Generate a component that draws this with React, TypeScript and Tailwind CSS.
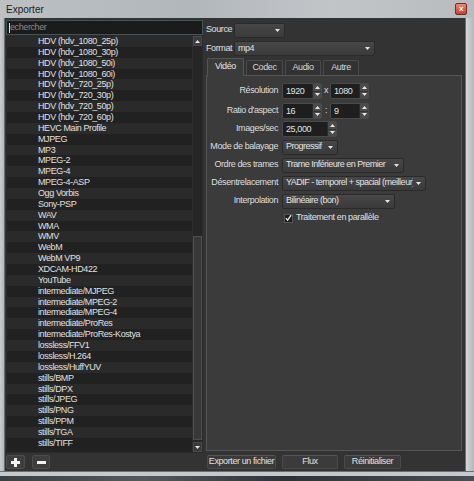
import React from "react";

const presets = [
  "HDV (hdv_1080_25p)",
  "HDV (hdv_1080_30p)",
  "HDV (hdv_1080_50i)",
  "HDV (hdv_1080_60i)",
  "HDV (hdv_720_25p)",
  "HDV (hdv_720_30p)",
  "HDV (hdv_720_50p)",
  "HDV (hdv_720_60p)",
  "HEVC Main Profile",
  "MJPEG",
  "MP3",
  "MPEG-2",
  "MPEG-4",
  "MPEG-4-ASP",
  "Ogg Vorbis",
  "Sony-PSP",
  "WAV",
  "WMA",
  "WMV",
  "WebM",
  "WebM VP9",
  "XDCAM-HD422",
  "YouTube",
  "intermediate/MJPEG",
  "intermediate/MPEG-2",
  "intermediate/MPEG-4",
  "intermediate/ProRes",
  "intermediate/ProRes-Kostya",
  "lossless/FFV1",
  "lossless/H.264",
  "lossless/HuffYUV",
  "stills/BMP",
  "stills/DPX",
  "stills/JPEG",
  "stills/PNG",
  "stills/PPM",
  "stills/TGA",
  "stills/TIFF",
];

function Arrow({ up = false }: { up?: boolean }) {
  return (
    <svg width="5" height="3" viewBox="0 0 5 3" className={up ? "rotate-180" : ""}>
      <path d="M0 0 L5 0 L2.5 3 Z" fill="#e6e6e6" />
    </svg>
  );
}

function Combo({ value, className }: { value: string; className: string }) {
  return (
    <div
      className={
        "flex items-center h-[15px] border border-[#2a2a2a] rounded-[2px] bg-[linear-gradient(to_bottom,#474747,#3a3a3a)] pl-[3px] pr-[4px] gap-[3px] " +
        className
      }
    >
      <span className="flex-1 overflow-hidden whitespace-nowrap text-[#e2e2e2] tracking-[-0.5px]">{value}</span>
      <Arrow />
    </div>
  );
}

function Spin({ value, className }: { value: string; className: string }) {
  return (
    <div className={"flex h-[16px] border border-[#4a4a4a] rounded-[2px] bg-[#1e1e1e] " + className}>
      <span className="flex-1 pl-[3px] leading-[14px] text-[#e2e2e2]">{value}</span>
      <div className="flex flex-col w-[9px] bg-[#4b4b4b] border-l border-[#2a2a2a]">
        <div className="flex-1 flex items-center justify-center border-b border-[#333]">
          <Arrow up />
        </div>
        <div className="flex-1 flex items-center justify-center">
          <Arrow />
        </div>
      </div>
    </div>
  );
}

function Row({ label, children, className = "" }: { label: string; children: React.ReactNode; className?: string }) {
  return (
    <div className={"flex items-center h-[18px] " + className}>
      <span className="w-[71px] text-right whitespace-nowrap text-[#dedede]">{label}</span>
      <div className="flex items-center ml-[4px]">{children}</div>
    </div>
  );
}

function Button({ label, className }: { label: string; className: string }) {
  return (
    <div
      className={
        "h-[14px] flex items-center justify-center border border-[#4a4a4a] border-t-[#555] rounded-[2px] bg-[#3b3b3b] text-[#e0e0e0] whitespace-nowrap " +
        className
      }
    >
      {label}
    </div>
  );
}

export default function App() {
  return (
    <div className="w-[474px] h-[481px] flex flex-col bg-[#c3c6c9] font-['Liberation_Sans',Arial,sans-serif] text-[9px] tracking-[-0.4px] overflow-hidden">
      {/* title bar */}
      <div className="h-[18px] flex items-center bg-[linear-gradient(to_right,#bcc0c3,#b2b7bb_40%,#c2c5c8_70%,#b8bcbf)] pl-[6px] pr-[7px]">
        <span className="flex-1 text-[10px] tracking-normal text-[#1c1c1c]">Exporter</span>
        <div className="w-[12px] h-[12px] rounded-[2px] border border-[#7a2a20] bg-[linear-gradient(to_bottom,#e9897a,#c8402c)] flex items-center justify-center text-white text-[8px] font-bold leading-none">
          x
        </div>
      </div>

      <div className="flex flex-1 min-h-0">
        {/* left frame */}
        <div className="w-[5px] bg-[linear-gradient(to_right,#c9cbcd,#b5b8bb)] border-r border-[#6b6e71]" />

        {/* client */}
        <div className="flex-1 flex bg-[#333333] pl-[1px] pr-[3px] pt-[2px] pb-[1px] gap-[2px]">
          {/* left column */}
          <div className="w-[197px] flex flex-col">
            <div className="h-[15px] flex items-center border border-[#3d5656] bg-[#1b1b1b] pl-[2px]">
              <span className="w-[1px] h-[10px] bg-[#dcdcdc]" />
              <span className="text-[#8a8a8a]">echercher</span>
            </div>
            <div className="h-[418px] flex border border-[#2a2a2a] bg-[#232323]">
              <div className="flex-1 flex flex-col">
                {presets.map((p, i) => (
                  <div
                    key={p}
                    className={
                      "h-[10.86px] pl-[31px] leading-[10.86px] text-[#e0e0e0] whitespace-nowrap " +
                      (i % 2 === 0 ? "bg-[#2a2a2a]" : "bg-[#212121]")
                    }
                  >
                    {p}
                  </div>
                ))}
              </div>
              <div className="w-[10px] flex flex-col bg-[#262626] border-l border-[#2e2e2e]">
                <div className="h-[10px] flex items-center justify-center bg-[#3a3a3a] border border-[#4a4a4a]">
                  <Arrow up />
                </div>
                <div className="flex-1 flex flex-col justify-end pb-[2px]">
                  <div className="h-[204px] bg-[#383838] border border-[#4f4f4f]" />
                </div>
                <div className="h-[10px] flex items-center justify-center bg-[#3a3a3a] border border-[#4a4a4a]">
                  <Arrow />
                </div>
              </div>
            </div>
            <div className="flex gap-[7px] mt-[2px]">
              <div className="w-[19px] h-[14px] flex items-center justify-center bg-[#3e3e3e] border border-[#4c4c4c] rounded-[2px]">
                <svg width="9" height="9" viewBox="0 0 9 9">
                  <path d="M3 0 H6 V3 H9 V6 H6 V9 H3 V6 H0 V3 H3 Z" fill="#f2f2f2" />
                </svg>
              </div>
              <div className="w-[18px] h-[14px] flex items-center justify-center bg-[#3e3e3e] border border-[#4c4c4c] rounded-[2px]">
                <svg width="9" height="3" viewBox="0 0 9 3">
                  <rect width="9" height="3" fill="#f2f2f2" />
                </svg>
              </div>
            </div>
          </div>

          {/* right column */}
          <div className="flex-1 flex flex-col pl-[1px]">
            <div className="flex items-center h-[14px] mt-[3px]">
              <span className="w-[28px] text-[#e0e0e0]">Source</span>
              <Combo value="" className="w-[51px] h-[14px]" />
            </div>
            <div className="flex items-center h-[15px] mt-[4px]">
              <span className="w-[28px] text-[#e0e0e0]">Format</span>
              <Combo value="mp4" className="w-[141px]" />
            </div>

            {/* tabs */}
            <div className="flex items-end h-[18px] mt-[1px] pl-[1px] gap-[2px]">
              <div className="w-[37px] h-[18px] flex items-center justify-center bg-[#3b3b3b] border border-b-0 border-[#555] rounded-t-[2px] text-[#e6e6e6] -mb-[1px] relative z-10 pb-[2px]">
                Vidéo
              </div>
              <div className="w-[37px] h-[15px] flex items-center justify-center bg-[#323232] border border-b-0 border-[#4a4a4a] rounded-t-[2px] text-[#d8d8d8]">
                Codec
              </div>
              <div className="w-[36px] h-[15px] flex items-center justify-center bg-[#323232] border border-b-0 border-[#4a4a4a] rounded-t-[2px] text-[#d8d8d8]">
                Audio
              </div>
              <div className="w-[36px] h-[15px] flex items-center justify-center bg-[#323232] border border-b-0 border-[#4a4a4a] rounded-t-[2px] text-[#d8d8d8]">
                Autre
              </div>
            </div>

            <div className="h-[376px] border border-[#555] bg-[#3b3b3b] flex flex-col pt-[6px]">
              <Row label="Résolution">
                <Spin value="1920" className="w-[40px]" />
                <span className="w-[8px] text-center text-[#dedede]">x</span>
                <Spin value="1080" className="w-[39px]" />
              </Row>
              <Row label="Ratio d'aspect" className="mt-[2px]">
                <Spin value="16" className="w-[40px]" />
                <span className="w-[8px] text-center text-[#dedede]">:</span>
                <Spin value="9" className="w-[39px]" />
              </Row>
              <Row label="Images/sec">
                <Spin value="25,000" className="w-[55px]" />
              </Row>
              <Row label="Mode de balayage">
                <Combo value="Progressif" className="w-[56px]" />
              </Row>
              <Row label="Ordre des trames">
                <Combo value="Trame Inférieure en Premier" className="w-[122px]" />
              </Row>
              <Row label="Désentrelacement">
                <Combo value="YADIF - temporel + spacial (meilleur)" className="w-[144px]" />
              </Row>
              <Row label="Interpolation">
                <Combo value="Bilinéaire (bon)" className="w-[113px]" />
              </Row>
              <div className="flex items-center h-[16px] pl-[77px] gap-[3px]">
                <div className="w-[9px] h-[9px] bg-[#1e1e1e] border border-[#555] flex items-center justify-center">
                  <svg width="8" height="8" viewBox="0 0 8 8">
                    <path d="M1 4.2 L3 6.5 L7 0.8" stroke="#f0f0f0" strokeWidth="1.4" fill="none" />
                  </svg>
                </div>
                <span className="text-[#e0e0e0]">Traitement en parallèle</span>
              </div>
            </div>

            <div className="flex items-center mt-[4px] pl-[1px] gap-[6px]">
              <Button label="Exporter un fichier" className="w-[69px]" />
              <Button label="Flux" className="w-[56px]" />
              <Button label="Réinitialiser" className="w-[57px]" />
            </div>
          </div>
        </div>

        {/* right frame */}
        <div className="w-[9px] flex">
          <div className="w-[1px] bg-[#6b6e71]" />
          <div className="flex-1 bg-[linear-gradient(to_right,#d4d6d8,#b4b7ba)]" />
        </div>
      </div>

      {/* bottom frame */}
      <div className="h-[5px] bg-[#c6c9cb] border-t border-[#6b6e71]" />
      <div className="h-[5px] bg-[linear-gradient(to_right,#3a3f44,#55595d_30%,#2f3337_60%,#4a4e52)]" />
    </div>
  );
}
